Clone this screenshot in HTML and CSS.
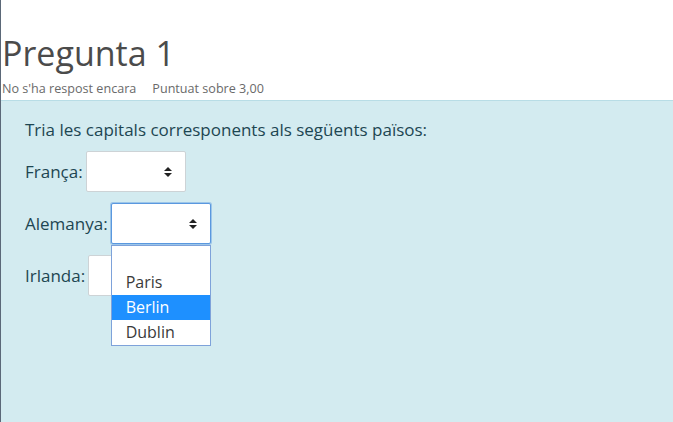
FILE: index.html
```html
<!DOCTYPE html>
<html lang="ca">
<head>
<meta charset="utf-8">
<title>Pregunta 1</title>
<link rel="stylesheet" href="styles.css">
</head>
<body>
<div class="page">
  <div class="info">
    <h3 class="qno">Pregunta 1</h3>
    <div class="meta">
      <span class="state">No s'ha respost encara</span>
      <span class="grade">Puntuat sobre 3,00</span>
    </div>
  </div>
  <div class="formulation">
    <p class="qtext">Tria les capitals corresponents als següents països:</p>
    <div class="row">
      <span class="label">França:</span>
      <span class="select"><span class="arrows"></span></span>
    </div>
    <div class="row">
      <span class="label">Alemanya:</span>
      <span class="select-wrap">
        <span class="select focused"><span class="arrows"></span></span>
        <ul class="dropdown">
          <li class="opt first"></li>
          <li class="opt">Paris</li>
          <li class="opt active">Berlin</li>
          <li class="opt">Dublin</li>
        </ul>
      </span>
    </div>
    <div class="row">
      <span class="label">Irlanda:</span>
      <span class="select"><span class="arrows"></span></span>
    </div>
  </div>
</div>
</body>
</html>
```

FILE: styles.css
```css
* { box-sizing: border-box; }
html, body { margin: 0; padding: 0; height: 100%; }
body {
  font-family: "Open Sans", "Noto Sans", sans-serif;
  background: #ffffff;
}
.page {
  height: 100%;
  border-left: 1px solid #5b6878;
  display: flex;
  flex-direction: column;
}
.info {
  padding: 30px 0 0 1px;
  height: 100px;
}
.qno {
  margin: 0;
  font-weight: 400;
  font-size: 34px;
  line-height: 46px;
  color: #4b4b4b;
}
.meta {
  font-size: 12.6px;
  color: #6a6a6a;
  line-height: 16px;
  margin-top: 5px;
  display: flex;
  gap: 16px;
}
.formulation {
  flex: 1;
  background: #d3ebf0;
  border-top: 1px solid #b8dde6;
  padding: 17px 24px;
  color: #1d4652;
  font-size: 17px;
}
.qtext { margin: 0 0 9px; line-height: 24px; }
.row {
  display: flex;
  align-items: center;
  margin-bottom: 11px;
  height: 41px;
}
.label { margin-right: 3px; }
.select-wrap { position: relative; display: inline-block; height: 41px; }
.select {
  display: inline-block;
  position: relative;
  width: 100px;
  height: 41px;
  background: #fff;
  border: 1px solid #cdd3d6;
  border-radius: 2px;
}
.focused {
  border: 1px solid #5a98df;
  box-shadow: 0 0 0 1px rgba(90,152,223,0.45);
}
.arrows {
  position: absolute;
  right: 13px;
  top: 50%;
  width: 8px;
  height: 10px;
  margin-top: -5px;
}
.arrows::before, .arrows::after {
  content: "";
  position: absolute;
  left: 0;
  border-left: 4px solid transparent;
  border-right: 4px solid transparent;
}
.arrows::before { top: 0; border-bottom: 4px solid #222; }
.arrows::after { bottom: 0; border-top: 4px solid #222; }
.dropdown {
  position: absolute;
  left: 0;
  top: 42px;
  width: 100px;
  margin: 0;
  padding: 0;
  list-style: none;
  background: #fff;
  border: 1px solid #7ea2da;
  z-index: 2;
}
.opt {
  height: 25px;
  line-height: 25px;
  padding-left: 14px;
  color: #3a3a3a;
  font-size: 16px;
}
.opt.first { height: 24px; }
.opt.active { background: #1e90ff; color: #fff; }
```
